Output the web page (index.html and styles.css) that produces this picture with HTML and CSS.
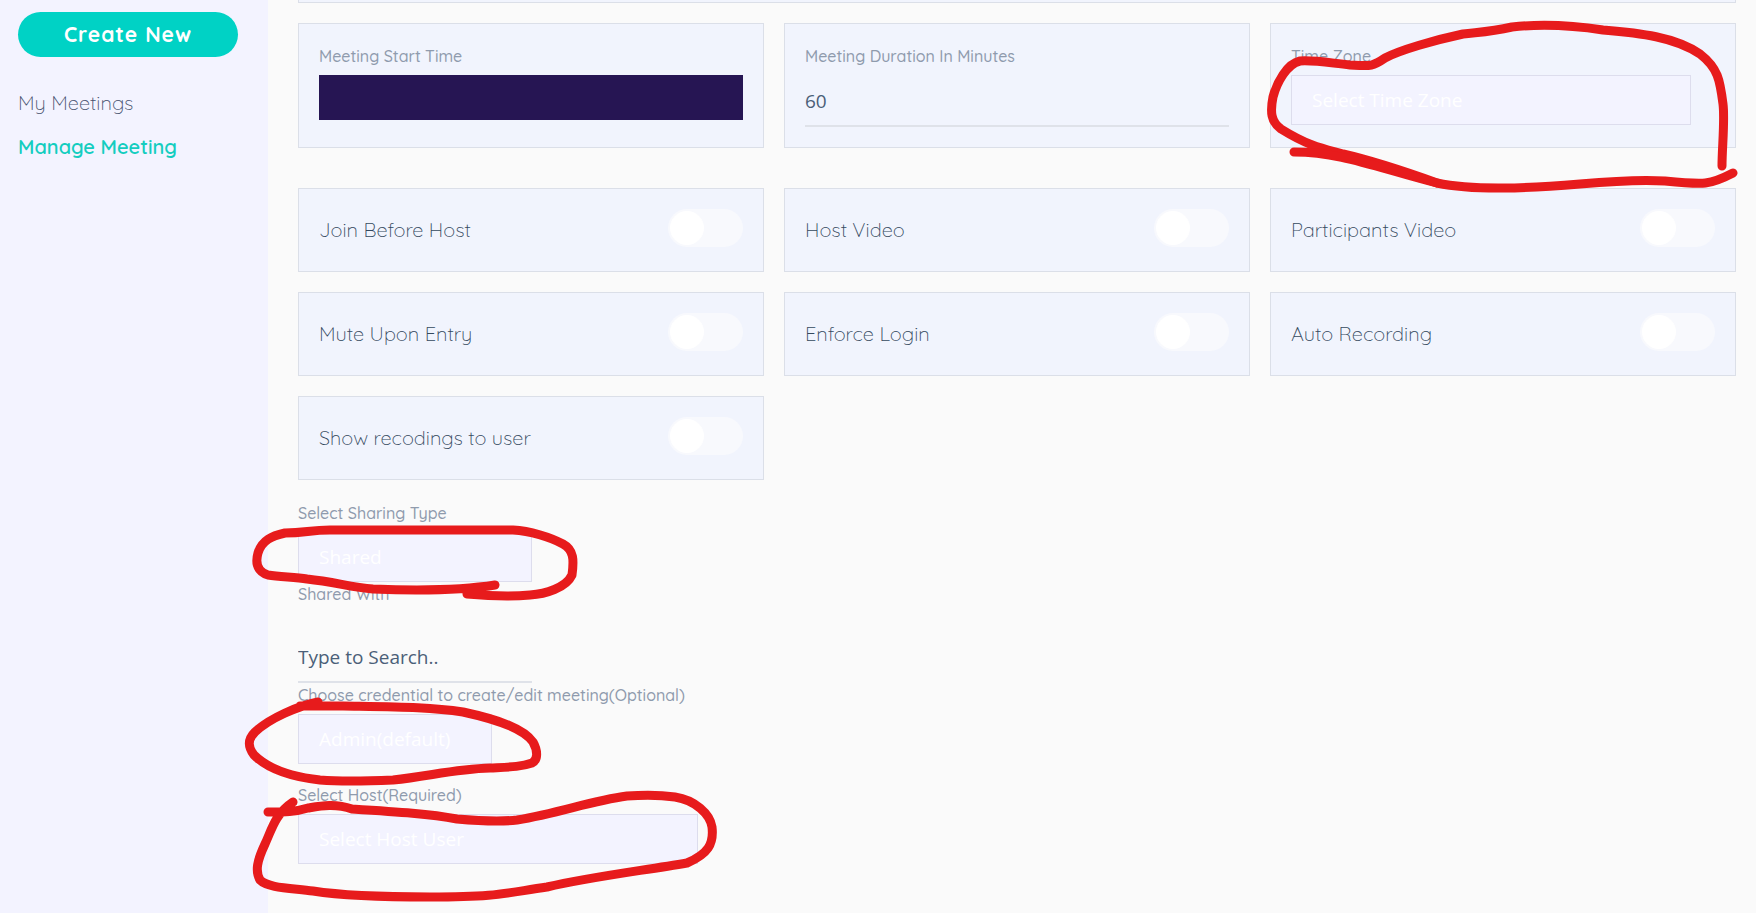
FILE: index.html
```html
<!DOCTYPE html>
<html lang="en">
<head>
    <meta charset="UTF-8">
    <meta name="viewport" content="width=device-width, initial-scale=1.0">
    <title>Manage Meeting</title>
    <link rel="stylesheet" href="styles.css">
</head>
<body>
<div class="layout">
    <aside class="sidebar">
        <button type="button" class="create">Create New</button>
        <nav class="menu">
            <a href="#">My Meetings</a>
            <a href="#" class="active">Manage Meeting</a>
        </nav>
    </aside>
    <main class="main">
        <div class="card card-cut"></div>
        <div class="grid fields">
            <div class="card field">
                <label for="start">Meeting Start Time</label>
                <input type="text" id="start" class="date">
            </div>
            <div class="card field">
                <label for="duration">Meeting Duration In Minutes</label>
                <input type="text" id="duration" class="line" value="60">
            </div>
            <div class="card field">
                <label for="zone">Time Zone</label>
                <select id="zone" class="select wide"><option>Select Time Zone</option></select>
                <svg class="mark mark-zone" width="480" height="180" viewBox="1264 17 480 180">
                    <path d="M1722 166C1722 148 1725 120 1723 104C1720 80 1718 68 1700 54C1675 37 1640 33 1603 30C1570 25 1540 24 1512 27C1490 32 1480 32 1463 34C1435 40 1400 50 1385 58C1372 67 1370 66 1350 65C1330 63 1315 60 1300 61C1287 64 1277 82 1273 97C1270 112 1271 122 1281 129C1310 147 1325 149 1343 154C1365 159 1395 168 1437 183"/>
                    <path d="M1294 152C1340 152 1375 167 1437 183C1475 191 1530 188 1580 184C1625 180 1650 180 1665 181C1705 185 1710 185 1733 173"/>
                </svg>
            </div>
        </div>
        <div class="grid">
            <label class="card option">Join Before Host<input type="checkbox" class="toggle"></label>
            <label class="card option">Host Video<input type="checkbox" class="toggle"></label>
            <label class="card option">Participants Video<input type="checkbox" class="toggle"></label>
            <label class="card option">Mute Upon Entry<input type="checkbox" class="toggle"></label>
            <label class="card option">Enforce Login<input type="checkbox" class="toggle"></label>
            <label class="card option">Auto Recording<input type="checkbox" class="toggle"></label>
            <label class="card option">Show recodings to user<input type="checkbox" class="toggle"></label>
        </div>
        <div class="sharing">
            <div class="field">
                <label for="type">Select Sharing Type</label>
                <select id="type" class="select medium"><option>Shared</option></select>
                <svg class="mark mark-type" width="330" height="80" viewBox="248 521 330 80">
                    <path d="M495 585C470 589 425 591 373 589C350 587 335 582 307 579C295 577 280 577 268 575C255 571 256 560 258 553C262 540 272 536 285 533C305 533 310 530 330 530L513 530C530 531 550 537 563 544C574 550 574 560 572 575C566 588 545 594 530 595C508 597 490 596 467 594"/>
                </svg>
            </div>
            <div class="field">
                <label for="search" class="search-label">Shared With</label>
                <input type="text" id="search" class="line medium" placeholder="Type to Search..">
            </div>
            <div class="field">
                <label for="credential">Choose credential to create/edit meeting(Optional)</label>
                <select id="credential" class="select small"><option>Admin(default)</option></select>
                <svg class="mark mark-credential" width="310" height="100" viewBox="238 694 310 100">
                    <path d="M318 703C298 707 270 719 255 733C247 741 248 748 254 756C268 770 293 778 320 781C345 783 370 782 393 781C430 777 455 770 490 769C510 768 520 768 532 764C538 761 538 752 533 743C524 730 500 721 463 713C430 708 400 708 343 707L300 707"/>
                </svg>
            </div>
            <div class="field host">
                <label for="host">Select Host(Required)</label>
                <select id="host" class="select wide"><option>Select Host User</option></select>
                <svg class="mark mark-host" width="480" height="119" viewBox="248 790 480 119">
                    <path d="M293 803C275 815 272 830 265 845C257 862 255 872 260 881C268 889 290 889 313 892C345 897 390 898 430 898C500 898 505 894 547 888C590 878 640 872 687 864C708 855 714 845 712 828C710 815 695 801 675 798C655 795 640 796 627 797C590 802 560 814 517 821C500 823 480 822 457 820C430 815 400 813 352 810C335 804 320 807 308 809C295 813 285 813 268 813"/>
                </svg>
            </div>
        </div>
    </main>
</div>
</body>
</html>
```

FILE: styles.css
```css
*{
    box-sizing: border-box;
}
body{
    margin:0;
    background-color: #fafafa;
    color:#34495e;
    font-family: Quicksand, Lato, sans-serif;
    font-size:20px;
    font-weight:300;
}
.layout{
    display:flex;
    min-height:100vh;
}
.sidebar{
    flex:0 0 268px;
    padding:12px 30px 12px 18px;
    background-color: #f3f3ff;
}
.create{
    display:block;
    width:100%;
    height:45px;
    padding:0 0 2px;
    border:none;
    border-radius:24px;
    background-color: #00d2c5;
    color:#fff;
    font-family:inherit;
    font-size:21px;
    font-weight:700;
    letter-spacing:1px;
}
.menu{
    display:flex;
    flex-direction: column;
    gap:20px;
    margin-top:34px;
    line-height:24px;
}
.menu a{
    color:#46516e;
    text-decoration: none;
}
.menu .active{
    color:#14cdbf;
    font-weight:600;
}
.main{
    flex:1;
    min-width:0;
    padding:0 20px 30px 30px;
}
.card{
    background-color: #f1f4fd;
    border:1px solid #dbdfe8;
}
.card-cut{
    height:3px;
    border-top:none;
    margin-bottom:20px;
}
.grid{
    display:grid;
    grid-template-columns: repeat(3, 1fr);
    gap:20px;
}
.fields{
    margin-bottom:40px;
}
.field{
    position: relative;
    display:flex;
    flex-direction: column;
    align-items: flex-start;
}
.card.field{
    padding:20px;
}
.field label{
    margin-bottom:7px;
    line-height:24px;
    font-size:16px;
    font-weight:500;
    color:#8f9bad;
}
.field input,
.select{
    font-family: "Open Sans", "Noto Sans", sans-serif;
    font-size:19px;
    border-radius:0;
    outline:none;
}
.date{
    width:100%;
    height:45px;
    border:none;
    padding:0 20px;
    background-color: #261553;
    color:#261553;
}
.line{
    width:100%;
    height:52px;
    padding:2px 0 0;
    border:none;
    border-bottom:2px solid #dfe2e9;
    background:none;
    color:#4b5f78;
}
.line::placeholder{
    color:#4b5f78;
    opacity:1;
}
.select{
    appearance: none;
    height:50px;
    padding:0 20px;
    border:1px solid #dddded;
    background-color: #f3f3ff;
    color:#fff;
    max-width:100%;
}
.wide{
    width:400px;
}
.medium{
    width:234px;
}
.small{
    width:194px;
}
.option{
    display:flex;
    justify-content: space-between;
    height:84px;
    padding:20px;
    line-height:42px;
}
.toggle{
    appearance: none;
    width:75px;
    height:38px;
    margin:0;
    padding:2px;
    border-radius:19px;
    background-color: #f8f9fd;
}
.toggle::before{
    content:"";
    display:block;
    width:34px;
    height:34px;
    border-radius:50%;
    background-color: #fff;
}
.toggle:checked{
    background-color: #00d2c5;
}
.toggle:checked::before{
    margin-left:auto;
}
.sharing{
    margin-top:21px;
}
.field .search-label{
    margin-bottom:25px;
}
.host{
    margin-top:19px;
}
/* red pen rings, drawn over the fields */
.mark{
    position: absolute;
    pointer-events: none;
    z-index:1;
    fill:none;
    stroke:#e71b1c;
    stroke-width:9;
    stroke-linecap: round;
    stroke-linejoin: round;
}
.mark-zone{
    left:-7px;
    top:-7px;
}
.mark-type{
    left:-50px;
    top:20px;
}
.mark-credential{
    left:-60px;
    top:10px;
}
.mark-host{
    left:-50px;
    top:6px;
}
```
